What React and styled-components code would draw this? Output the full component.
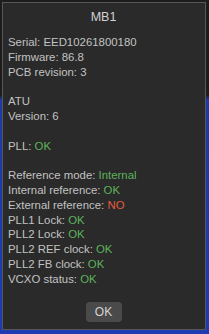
import React from "react";
import styled, { createGlobalStyle } from "styled-components";

const Global = createGlobalStyle`
  html, body { margin: 0; padding: 0; }
  body {
    width: 209px;
    height: 334px;
    overflow: hidden;
    background: linear-gradient(#1d1d1d 0, #1d1d1d 95px, #1c3aa4 100px, #1d3cb4 100%);
    font-family: "Liberation Sans", Arial, sans-serif;
  }
`;

const Backdrop = styled.div`
  padding: 2px 3px 4px 2px;
  height: 334px;
  box-sizing: border-box;
`;

const Dialog = styled.div`
  height: 100%;
  box-sizing: border-box;
  background: #2a2a2a;
  border: 1px solid #575757;
  display: flex;
  flex-direction: column;
  padding: 6px 6px 0 5px;
`;

const Title = styled.div`
  text-align: center;
  color: #d2d2d2;
  font-size: 12.5px;
  line-height: 16px;
  margin-bottom: 10px;
`;

const Body = styled.div`
  color: #c2c2c2;
  font-size: 11.4px;
  line-height: 14.8px;
`;

const Line = styled.div`
  white-space: nowrap;
  min-height: 14.8px;
`;

const Value = styled.span`
  color: ${(p) => (p.$bad ? "#e35d3f" : "#5db35a")};
`;

const Footer = styled.div`
  margin-top: auto;
  display: flex;
  justify-content: center;
  padding-bottom: 7px;
`;

const Button = styled.button`
  width: 36px;
  height: 20px;
  background: #4a4a4a;
  border: none;
  border-radius: 4px;
  color: #d4d4d4;
  font-family: inherit;
  font-size: 12px;
  padding: 0;
`;

const lines = [
  ["Serial: EED10261800180"],
  ["Firmware: 86.8"],
  ["PCB revision: 3"],
  [""],
  ["ATU"],
  ["Version: 6"],
  [""],
  ["PLL: ", "OK"],
  [""],
  ["Reference mode: ", "Internal"],
  ["Internal reference: ", "OK"],
  ["External reference: ", "NO", true],
  ["PLL1 Lock: ", "OK"],
  ["PLL2 Lock: ", "OK"],
  ["PLL2 REF clock: ", "OK"],
  ["PLL2 FB clock: ", "OK"],
  ["VCXO status: ", "OK"],
];

export default function App() {
  return (
    <>
      <Global />
      <Backdrop>
        <Dialog>
          <Title>MB1</Title>
          <Body>
            {lines.map(([label, val, bad], i) => (
              <Line key={i}>
                {label}
                {val && <Value $bad={bad}>{val}</Value>}
              </Line>
            ))}
          </Body>
          <Footer>
            <Button>OK</Button>
          </Footer>
        </Dialog>
      </Backdrop>
    </>
  );
}
